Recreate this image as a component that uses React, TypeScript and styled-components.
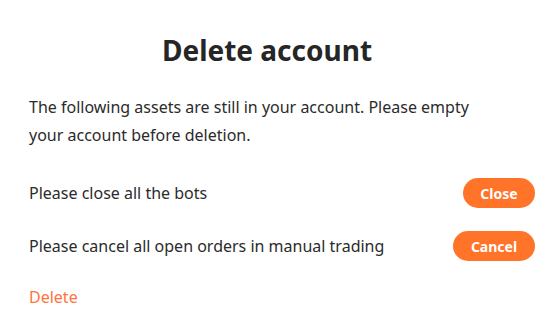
import styled, { createGlobalStyle } from "styled-components";

const Global = createGlobalStyle`
  html, body {
    margin: 0;
    padding: 0;
    background: #ffffff;
  }
  body {
    font-family: "Noto Sans", "Open Sans", sans-serif;
    color: #2b2b2b;
  }
`;

const Dialog = styled.div`
  width: 553px;
  height: 317px;
  box-sizing: border-box;
  padding: 30px 18px 0 29px;
  display: flex;
  flex-direction: column;
`;

const Title = styled.h1`
  margin: 0;
  padding-right: 30px;
  font-size: 28px;
  line-height: 40px;
  font-weight: 700;
  text-align: center;
  color: #262626;
`;

const Intro = styled.p`
  margin: 23px 0 0;
  max-width: 450px;
  font-size: 16px;
  line-height: 28px;
`;

const List = styled.div`
  margin-top: 29px;
  display: flex;
  flex-direction: column;
  gap: 23px;
`;

const Row = styled.div`
  display: flex;
  align-items: center;
  justify-content: space-between;
  font-size: 16px;
`;

const Pill = styled.button<{ $w: number }>`
  width: ${(p) => p.$w}px;
  height: 30px;
  border: none;
  border-radius: 15px;
  background: #ff7428;
  color: #ffffff;
  font-family: "Noto Sans", sans-serif;
  font-size: 14px;
  font-weight: 700;
  padding: 0;
`;

const DeleteLink = styled.div`
  margin-top: 25px;
  font-size: 16px;
  color: #ff7440;
`;

export default function App() {
  return (
    <>
      <Global />
      <Dialog>
        <Title>Delete account</Title>
        <Intro>
          The following assets are still in your account. Please empty your
          account before deletion.
        </Intro>
        <List>
          <Row>
            <span>Please close all the bots</span>
            <Pill $w={72}>Close</Pill>
          </Row>
          <Row>
            <span>Please cancel all open orders in manual trading</span>
            <Pill $w={82}>Cancel</Pill>
          </Row>
        </List>
        <DeleteLink>Delete</DeleteLink>
      </Dialog>
    </>
  );
}
